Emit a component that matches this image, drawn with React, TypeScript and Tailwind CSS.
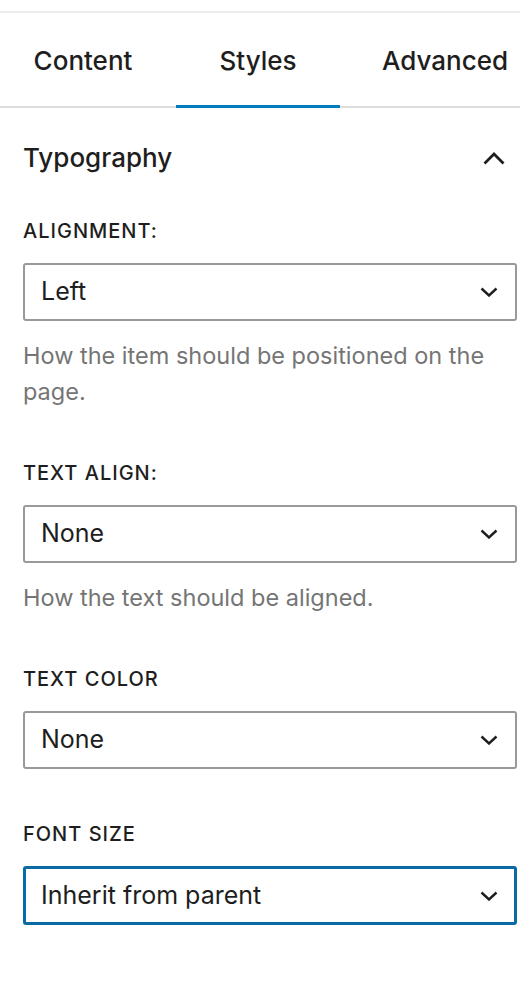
type Field = {
  label: string;
  value: string;
  help?: string;
  focused?: boolean;
};

const fields: Field[] = [
  { label: "Alignment:", value: "Left", help: "How the item should be positioned on the page." },
  { label: "Text Align:", value: "None", help: "How the text should be aligned." },
  { label: "Text Color", value: "None" },
  { label: "Font Size", value: "Inherit from parent", focused: true },
];

const tabs = [
  { name: "Content", width: "w-[186px] -ml-[10px]" },
  { name: "Styles", width: "w-[164px]", active: true },
  { name: "Advanced", width: "w-[210px]" },
];

const ChevronUp = () => (
  <svg width="22" height="14" viewBox="0 0 22 14" fill="none">
    <path d="M1.5 12.5L11 3L20.5 12.5" stroke="#1e1e1e" strokeWidth="2.8" />
  </svg>
);

const ChevronDown = () => (
  <svg width="18" height="10" viewBox="0 0 18 10" fill="none">
    <path d="M1.5 1.5L9 8.5L16.5 1.5" stroke="#1e1e1e" strokeWidth="2.4" />
  </svg>
);

const SelectField = ({ field }: { field: Field }) => (
  <div className={field.help ? "flex flex-col mb-[51px]" : "flex flex-col mb-[53px]"}>
    <label className="text-[20px] font-medium uppercase tracking-[1px] text-[#1e1e1e] leading-[24px] mb-[20px]">
      {field.label}
    </label>
    <div
      className={
        field.focused
          ? "flex items-center justify-between h-[59px] rounded-[3px] border-[3px] border-[#0a6aa5] pl-[15px] pr-[16px]"
          : "flex items-center justify-between h-[58px] rounded-[3px] border-2 border-[#999999] pl-[16px] pr-[17px]"
      }
    >
      <span className="text-[25px] text-[#1e1e1e]">{field.value}</span>
      <ChevronDown />
    </div>
    {field.help && (
      <p className="text-[23.5px] leading-[36px] text-[#757575] mt-[17px] pr-[20px]">{field.help}</p>
    )}
  </div>
);

const App = () => {
  return (
    <div className="w-[520px] h-[990px] bg-white font-['Inter',sans-serif] overflow-hidden">
      <div className="h-[11px]" />
      <div className="border-t-2 border-[#ececef]" />
      <div className="flex border-b-2 border-[#dddddd] h-[95px]">
        {tabs.map((tab) => (
          <div
            key={tab.name}
            className={
              tab.active
                ? `${tab.width} shrink-0 flex items-center justify-center pt-[2px] text-[26px] font-medium text-[#1e1e1e] border-b-[3px] border-[#007cba] -mb-[2px]`
                : `${tab.width} shrink-0 flex items-center justify-center pt-[2px] text-[26px] font-medium text-[#1e1e1e]`
            }
          >
            {tab.name}
          </div>
        ))}
      </div>
      <div className="pl-[23px] pr-[3px] pt-[34px]">
        <div className="flex items-center justify-between mb-[45px] pr-[12px]">
          <h2 className="text-[26px] leading-[32px] font-medium text-[#1e1e1e]">Typography</h2>
          <ChevronUp />
        </div>
        <div className="flex flex-col">
          {fields.map((field) => (
            <SelectField key={field.label} field={field} />
          ))}
        </div>
      </div>
    </div>
  );
};

export default App;
